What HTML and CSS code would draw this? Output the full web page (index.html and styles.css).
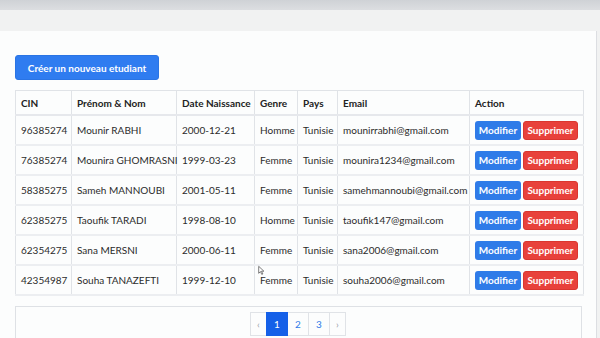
FILE: index.html
```html
<!DOCTYPE html>
<html lang="fr">
  <head>
    <meta charset="UTF-8" />
    <meta name="viewport" content="width=device-width, initial-scale=1.0" />
    <title>Liste des etudiants</title>
    <link rel="stylesheet" href="styles.css">
  </head>
  <body>
    <div class="topbar"></div>
    <div class="page">
      <div class="card">
        <button class="btn btn-create">Créer un nouveau etudiant</button>
        <table class="students">
          <colgroup>
            <col class="c-cin" />
            <col class="c-nom" />
            <col class="c-date" />
            <col class="c-genre" />
            <col class="c-pays" />
            <col class="c-email" />
            <col class="c-action" />
          </colgroup>
          <thead>
            <tr>
              <th>CIN</th>
              <th>Prénom &amp; Nom</th>
              <th>Date Naissance</th>
              <th>Genre</th>
              <th>Pays</th>
              <th>Email</th>
              <th>Action</th>
            </tr>
          </thead>
          <tbody>
            <tr>
              <td>96385274</td>
              <td>Mounir RABHI</td>
              <td>2000-12-21</td>
              <td>Homme</td>
              <td>Tunisie</td>
              <td>mounirrabhi@gmail.com</td>
              <td class="actions"><button class="btn btn-edit">Modifier</button><button class="btn btn-delete">Supprimer</button></td>
            </tr>
            <tr>
              <td>76385274</td>
              <td>Mounira GHOMRASNI</td>
              <td>1999-03-23</td>
              <td>Femme</td>
              <td>Tunisie</td>
              <td>mounira1234@gmail.com</td>
              <td class="actions"><button class="btn btn-edit">Modifier</button><button class="btn btn-delete">Supprimer</button></td>
            </tr>
            <tr>
              <td>58385275</td>
              <td>Sameh MANNOUBI</td>
              <td>2001-05-11</td>
              <td>Femme</td>
              <td>Tunisie</td>
              <td>samehmannoubi@gmail.com</td>
              <td class="actions"><button class="btn btn-edit">Modifier</button><button class="btn btn-delete">Supprimer</button></td>
            </tr>
            <tr>
              <td>62385275</td>
              <td>Taoufik TARADI</td>
              <td>1998-08-10</td>
              <td>Homme</td>
              <td>Tunisie</td>
              <td>taoufik147@gmail.com</td>
              <td class="actions"><button class="btn btn-edit">Modifier</button><button class="btn btn-delete">Supprimer</button></td>
            </tr>
            <tr>
              <td>62354275</td>
              <td>Sana MERSNI</td>
              <td>2000-06-11</td>
              <td>Femme</td>
              <td>Tunisie</td>
              <td>sana2006@gmail.com</td>
              <td class="actions"><button class="btn btn-edit">Modifier</button><button class="btn btn-delete">Supprimer</button></td>
            </tr>
            <tr>
              <td>42354987</td>
              <td>Souha TANAZEFTI</td>
              <td>1999-12-10</td>
              <td class="cursor-cell">Femme
                <svg class="cursor" viewBox="0 0 10 14" width="7" height="11">
                  <path d="M1 1 L1 11 L3.5 8.6 L5.4 12.6 L6.9 11.9 L5 8 L8.4 8 Z" fill="#fff" stroke="#333" stroke-width="0.9" stroke-linejoin="round" />
                </svg>
              </td>
              <td>Tunisie</td>
              <td>souha2006@gmail.com</td>
              <td class="actions"><button class="btn btn-edit">Modifier</button><button class="btn btn-delete">Supprimer</button></td>
            </tr>
          </tbody>
        </table>
        <div class="pager-box">
          <ul class="pagination">
            <li class="arrow">&lsaquo;</li>
            <li class="active">1</li>
            <li>2</li>
            <li>3</li>
            <li class="arrow">&rsaquo;</li>
          </ul>
        </div>
      </div>
    </div>
  </body>
</html>
```

FILE: styles.css
```css
body {
  margin: 0;
  font-family: 'Lato', 'Open Sans', sans-serif;
  font-size: 10px;
  color: #2b2b2b;
  background-color: #f1f2f2;
  overflow: hidden;
  height: 338px;
}
.topbar {
  height: 10px;
  background: linear-gradient(#cfd2d6, #dcdee1);
}
.page {
  padding-top: 21px;
  margin-right: 3px;
}
.card {
  background-color: #fcfdfd;
  border-right: 1px solid #dcdee2;
  padding: 24px 14px 0 15px;
}

.btn {
  font-family: inherit;
  font-weight: bold;
  color: #fff;
  border: 1px solid transparent;
  border-radius: 3px;
  cursor: pointer;
  padding: 0;
}
.btn-create {
  width: 144px;
  height: 25px;
  font-size: 10px;
  background-color: #2f7cf0;
  border-color: #2a74e4;
  display: block;
  margin-bottom: 10px;
}
.btn-edit {
  width: 46px;
  height: 19px;
  font-size: 10px;
  background-color: #2f7be8;
  margin-right: 2px;
  vertical-align: middle;
}
.btn-delete {
  width: 55px;
  height: 19px;
  font-size: 10px;
  background-color: #e8413b;
  border-color: #d9362f;
  vertical-align: middle;
}

.students {
  width: 568px;
  table-layout: fixed;
  border-collapse: collapse;
}
.students th,
.students td {
  border: 1px solid #e0e3e7;
  padding: 0 5px;
  text-align: left;
  white-space: nowrap;
}
.students th {
  height: 23px;
  font-weight: bold;
  color: #222;
  border-bottom: 2px solid #e6e8ec;
}
.students td {
  height: 28px;
  border-bottom: 2px solid #eceef1;
}
.students td.actions {
  line-height: 19px;
}
.c-cin { width: 56px; }
.c-nom { width: 105px; }
.c-date { width: 78px; }
.c-genre { width: 43px; }
.c-pays { width: 40px; }
.c-email { width: 132px; }
.c-action { width: 114px; }

.cursor-cell {
  position: relative;
}
.cursor {
  position: absolute;
  left: 3px;
  top: -1px;
}

.pager-box {
  margin-top: 10px;
  border: 1px solid #dee1e5;
  border-bottom: none;
  padding: 5px 0 0;
  height: 40px;
}
.pagination {
  list-style: none;
  margin: 0;
  padding: 0;
  display: flex;
  justify-content: center;
}
.pagination li {
  width: 20px;
  height: 22px;
  line-height: 22px;
  text-align: center;
  color: #2f7be8;
  border: 1px solid #e0e3e7;
  margin-left: -1px;
}
.pagination li.arrow {
  width: 15px;
  color: #9aa0a8;
  font-size: 10px;
}
.pagination li.active {
  background-color: #1560e8;
  border-color: #1560e8;
  color: #fff;
  position: relative;
}
```
